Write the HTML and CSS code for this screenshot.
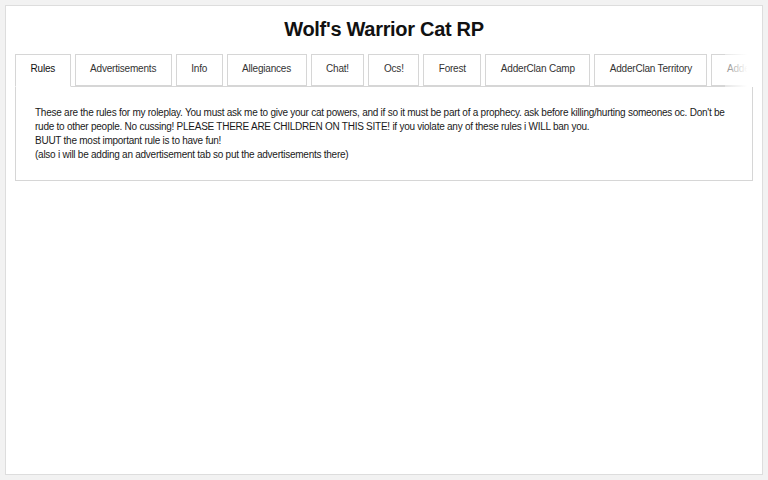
FILE: index.html
```html
<!DOCTYPE html>
<html lang="en">
<head>
    <meta charset="UTF-8">
    <meta name="viewport" content="width=device-width, initial-scale=1.0">
    <title>Wolf's Warrior Cat RP</title>
    <link rel="stylesheet" href="styles.css">
</head>
<body>
    <div class="page">
        <!-- Header -->
        <h1 class="title">Wolf's Warrior Cat RP</h1>
        <!-- Tabs -->
        <div class="tabs">
            <div class="tab-strip">
                <div class="tab active">Rules</div>
                <div class="tab">Advertisements</div>
                <div class="tab">Info</div>
                <div class="tab">Allegiances</div>
                <div class="tab">Chat!</div>
                <div class="tab">Ocs!</div>
                <div class="tab">Forest</div>
                <div class="tab">AdderClan Camp</div>
                <div class="tab">AdderClan Territory</div>
                <div class="tab">AdderClan Nursery</div>
            </div>
            <div class="tab-fade"></div>
        </div>
        <div class="tab-panel">
            <p>These are the rules for my roleplay. You must ask me to give your cat powers, and if so it must be part of a prophecy. ask before killing/hurting someones oc. Don't be rude to other people. No cussing! PLEASE THERE ARE CHILDREN ON THIS SITE! if you violate any of these rules i WILL ban you.<br>
            BUUT the most important rule is to have fun!<br>
            (also i will be adding an advertisement tab so put the advertisements there)</p>
        </div>
    </div>
</body>
</html>
```

FILE: styles.css
```css
body {
    font-family: 'Liberation Sans', Arial, sans-serif;
    background: #f2f2f2;
    margin: 0;
    padding: 5px;
    color: #1a1a1a;
}
.page {
    box-sizing: border-box;
    height: 470px;
    background: white;
    border: 1px solid #ddd;
    padding: 11px 9px;
}
.title {
    text-align: center;
    font-size: 20px;
    line-height: 24px;
    letter-spacing: -0.3px;
    margin: 0 0 13px;
    color: #111;
}
.tabs {
    position: relative;
    overflow: hidden;
}
.tab-strip {
    display: flex;
    align-items: flex-start;
    gap: 4px;
    white-space: nowrap;
}
.tab {
    flex: none;
    padding: 0 14.5px;
    height: 30px;
    line-height: 28px;
    font-size: 10px;
    letter-spacing: -0.2px;
    color: #333;
    border: 1px solid #d6d6d6;
    background: white;
}
.tab.active {
    border-bottom-color: white;
    height: 31px;
    color: #111;
}
/* fade the tabs that run past the edge */
.tab-fade {
    position: absolute;
    top: 0;
    right: 0;
    width: 28px;
    height: 100%;
    background: linear-gradient(to right, rgba(255,255,255,0.4), white 80%);
}
.tab-panel {
    border: 1px solid #d6d6d6;
    margin-top: -1px;
    padding: 19px 19px 18px;
}
.tab-panel p {
    margin: 0;
    font-size: 10px;
    line-height: 14px;
    letter-spacing: -0.25px;
}
```
